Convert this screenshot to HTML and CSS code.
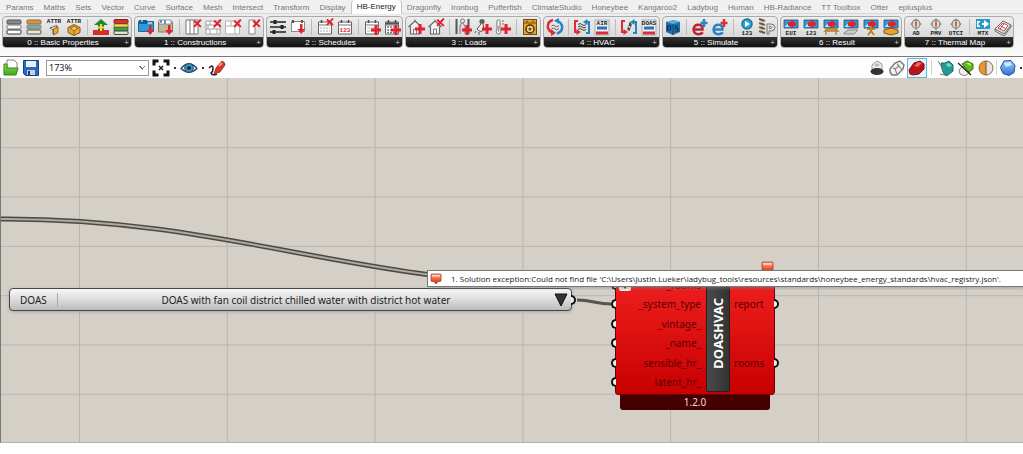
FILE: index.html
```html
<!DOCTYPE html>
<html lang="en">
<head>
<meta charset="utf-8">
<title>Grasshopper</title>
<link rel="stylesheet" href="styles.css">
</head>
<body>
<svg class="defs" aria-hidden="true">
  <defs>
    <linearGradient id="gBlue" x1="0" y1="0" x2="0" y2="1"><stop offset="0" stop-color="#9dd0fa"/><stop offset="1" stop-color="#2a6fd0"/></linearGradient>
    <linearGradient id="gBalloon" x1="0" y1="0" x2="0" y2="1"><stop offset="0" stop-color="#ffb48a"/><stop offset=".5" stop-color="#f4633a"/><stop offset="1" stop-color="#d61f10"/></linearGradient>
    <linearGradient id="gGreen" x1="0" y1="0" x2="0" y2="1"><stop offset="0" stop-color="#8fe04a"/><stop offset="1" stop-color="#3fa51c"/></linearGradient>
    <linearGradient id="gHalf" x1="0" y1="0" x2="1" y2="0"><stop offset=".5" stop-color="#e8962e"/><stop offset=".5" stop-color="#e6e6e6"/></linearGradient>
    <symbol id="plus" viewBox="0 0 10 10"><path d="M3.500 0h3v3.500H10v3H6.500V10h-3V6.500H0v-3h3.500z" fill="#e3202c"/></symbol>
    <symbol id="cross" viewBox="0 0 8 8"><path d="M1 1.500 7 7M7 .5 1 7" stroke="#e3202c" stroke-width="1.800" fill="none"/></symbol>
    <symbol id="down" viewBox="0 0 8 10"><path d="M3 0h2.500v5H8L4.200 10 .5 5H3z" fill="#e3202c"/></symbol>
    <symbol id="screen" viewBox="0 0 18 18"><path d="M2 2h14v8H2z" fill="#2e9bd2" stroke="#1c4f7c" stroke-width=".8"/><path d="M2.500 9l3-3 2 3z" fill="#bfe4f7"/><path d="M6 4h3V1.500L15 6l-6 4.500V8H6z" fill="#e3202c"/></symbol>
    <symbol id="target" viewBox="0 0 18 18"><circle cx="9" cy="6" r="4" fill="#ddd" stroke="#8a8a8a" stroke-width="1.300"/><path d="M9 .5v2M9 10v2M3.500 6h2M12.500 6h2" stroke="#777"/><path d="M9 3.500v5" stroke="#c9562e" stroke-width="1.800"/></symbol>
    <symbol id="cal" viewBox="0 0 18 18"><path d="M2.500 4h13v12h-13z" fill="#fff" stroke="#666"/><path d="M2.500 7h13" stroke="#777"/><path d="M5.500 2v3M12.500 2v3" stroke="#444" stroke-width="1.500"/></symbol>
    <symbol id="house" viewBox="0 0 18 18"><path d="M1.500 9 8 3l6.500 6M3.500 8.500V16h9V8.500" fill="#f6f6f6" stroke="#666" stroke-width="1.200"/><path d="M6.500 16v-5h3v5M8 3V1.500" fill="none" stroke="#777"/></symbol>
    <symbol id="energy" viewBox="0 0 18 18"><path d="M3 11.500h8.500C12 5.500 4 5 2.700 10.500 2 16.500 8 17.500 12 14.500" fill="none" stroke="currentColor" stroke-width="2.500"/></symbol>
    <symbol id="balloon" viewBox="0 0 12 12"><path d="M1.500 1h9q.5 0 .5.500v6q0 1-1 1H8L6 11 4 8.500H2q-1 0-1-1v-6Q1 1 1.500 1z" fill="url(#gBalloon)" stroke="#a83a2a" stroke-width=".8"/><path d="M2 2h8v1.500H2z" fill="#ffd9c2"/></symbol>
    <symbol id="loop" viewBox="0 0 18 18"><path d="M5 3H2v11h2" stroke="#dc2e39" stroke-width="2" fill="none"/><path d="M3.500 11 8 14l-4.500 3z" fill="#dc2e39"/><path d="M13 15h3V4h-2" stroke="#2684c6" stroke-width="2" fill="none"/><path d="M14.500 1 10 4l4.500 3z" fill="#2684c6"/></symbol>
  </defs>
</svg>

<nav class="tabs" aria-label="Component tabs">
  <a href="#">Params</a><a href="#">Maths</a><a href="#">Sets</a><a href="#">Vector</a><a href="#">Curve</a><a href="#">Surface</a><a href="#">Mesh</a><a href="#">Intersect</a><a href="#">Transform</a><a href="#">Display</a><a href="#" class="active" aria-current="page">HB-Energy</a><a href="#">Dragonfly</a><a href="#">Ironbug</a><a href="#">Pufferfish</a><a href="#">ClimateStudio</a><a href="#">Honeybee</a><a href="#">Kangaroo2</a><a href="#">Ladybug</a><a href="#">Human</a><a href="#">HB-Radiance</a><a href="#">TT Toolbox</a><a href="#">Otter</a><a href="#">eplusplus</a>
</nav>

<div class="ribbon">
  <section class="panel">
    <div class="icons">
      <button aria-label="Opaque"><svg viewBox="0 0 18 18"><rect x="2" y="2" width="14" height="4" rx="1" fill="#888" stroke="#555"/><rect x="2" y="7" width="14" height="4" rx="1" fill="#f7f7f7" stroke="#777"/><rect x="2" y="12" width="14" height="4" rx="1" fill="#fff" stroke="#333"/></svg></button>
      <button aria-label="Construction layers"><svg viewBox="0 0 18 18"><rect x="2" y="2" width="14" height="4" rx="1" fill="#d69248" stroke="#8a6c45"/><rect x="2" y="7" width="14" height="4" rx="1" fill="#62b4bf" stroke="#b57a45"/><rect x="2" y="12" width="14" height="4" rx="1" fill="#ece5cf" stroke="#555"/></svg></button>
      <button aria-label="Face attributes"><svg viewBox="0 0 18 18"><text x="9" y="5" class="mini">ATTR</text><path d="M5 10 12 7.500V14l-4 2v-4z" fill="#fff" stroke="#333" stroke-width=".8"/><path d="M8.500 10.500 13 9v5.500L8.500 17z" fill="#eda72d" stroke="#7b5312" stroke-width=".8"/></svg></button>
      <button aria-label="Room attributes"><svg viewBox="0 0 18 18"><text x="9" y="5" class="mini">ATTR</text><path d="M3 9.500 9 6.500l6 3v5l-6 3-6-3z" fill="#eda72d" stroke="#7b5312"/><path d="m5 10.500 4-2 4 2-4 2zM9 13v4" fill="#f8cf78" stroke="#7b5312" stroke-width=".8"/></svg></button>
      <i></i>
      <button aria-label="Search constructions"><svg viewBox="0 0 18 18"><path d="M1 12h16v5H1z" fill="#d92a2d"/><path d="M6 12V7H2l7-6 7 6h-4v5z" fill="#23823b"/><path d="M9 6v7M6 9.500h6" stroke="#f5de27" stroke-width="2"/></svg></button>
      <button aria-label="Construction set"><svg viewBox="0 0 18 18"><rect x="2" y="1.500" width="14" height="4" rx="1" fill="#d93030" stroke="#862222"/><rect x="2" y="6" width="14" height="3" fill="#f1db47" stroke="#776c22" stroke-width=".7"/><rect x="2" y="9.500" width="14" height="3" fill="#36a04b" stroke="#1e6030" stroke-width=".7"/><rect x="2" y="13" width="14" height="3.500" rx="1" fill="#e8e1c4" stroke="#444"/></svg></button>
    </div>
    <h2>0 :: Basic Properties<span>+</span></h2>
  </section>

  <section class="panel">
    <div class="icons">
      <button aria-label="Deconstruct set"><svg viewBox="0 0 18 18"><path d="M1.500 3.500h15v10h-15z" fill="#2d9bd9" stroke="#23658e"/><path d="M2 2h8v4H2z" fill="#155c94"/><path d="M4 3h2M11 5h4" stroke="#fff"/><use href="#down" x="9" y="7" width="8" height="10"/></svg></button>
      <button aria-label="Deconstruct construction"><svg viewBox="0 0 18 18"><path d="M1.500 4h14v10h-14z" fill="#c3b5a0" stroke="#8a7c68"/><path d="M2 2h12v4H2z" fill="#fff" stroke="#777" stroke-width=".7"/><path d="M4 2v3M8 2v4" stroke="#2782b8" stroke-width="1.500"/><use href="#down" x="8" y="7" width="8" height="10"/></svg></button>
      <i></i>
      <button aria-label="Window material"><svg viewBox="0 0 18 18"><path d="M2 2h12v14H2zM6 2v14M10 2v14" fill="#fff" stroke="#777"/><use href="#cross" x="9" y="1" width="9" height="9"/></svg></button>
      <button aria-label="Opaque material"><svg viewBox="0 0 18 18"><path d="M2 3h14v13H2zM2 7h14M2 11h14M6 3v4M4 7v4M10 7v4M6 11v5M13 11v5" fill="#fff" stroke="#999" stroke-width=".9"/><use href="#cross" x="9" y="1" width="9" height="9"/></svg></button>
      <button aria-label="No mass material"><svg viewBox="0 0 18 18"><path d="M1.500 3h14v13h-14zM2 8h13M7 3v5M11 8v8" fill="#fff" stroke="#aaa" stroke-width=".9"/><use href="#cross" x="9" y="1" width="9" height="9"/></svg></button>
      <button aria-label="Glazing material"><svg viewBox="0 0 18 18"><path d="M5 2h6v14H5z" fill="#fff" stroke="#888"/><use href="#cross" x="8" y="1" width="9" height="9"/></svg></button>
    </div>
    <h2>1 :: Constructions<span>+</span></h2>
  </section>

  <section class="panel">
    <div class="icons">
      <button aria-label="Schedule settings"><svg viewBox="0 0 18 18"><path d="M1 4h16M1 9h16M1 14h16" stroke="#222" stroke-width="1.500"/><path d="M6 2v4M13 7v4M5 12v4" stroke="#222" stroke-width="3"/></svg></button>
      <button aria-label="Deconstruct schedule"><svg viewBox="0 0 18 18"><path d="M2.500 3.500h13v10h-13z" fill="#fff" stroke="#888"/><path d="M4 2v3M13 2v3" stroke="#333" stroke-width="1.500"/><use href="#down" x="8" y="6" width="8" height="10"/></svg></button>
      <i></i>
      <button aria-label="Clear schedule"><svg viewBox="0 0 18 18"><use href="#cal"/><path d="M4 10h10M4 13h10" stroke="#aaa" stroke-dasharray="2 1"/><use href="#cross" x="10" y="0" width="8" height="8"/></svg></button>
      <button aria-label="Schedule to data"><svg viewBox="0 0 18 18"><use href="#cal"/><text x="9" y="14" class="mini red">123</text></svg></button>
      <i></i>
      <button aria-label="Constant schedule"><svg viewBox="0 0 18 18"><use href="#cal"/><path d="M4 10h10M4 13h10" stroke="#bbb"/><use href="#plus" x="8" y="7" width="10" height="10"/></svg></button>
      <button aria-label="Weekly schedule"><svg viewBox="0 0 18 18"><use href="#cal"/><path d="M3 4.500h12v2H3z" fill="#555"/><path d="M4 9h10M4 12h10M4 14.500h10" stroke="#777" stroke-width="1.300" stroke-dasharray="2 1"/><use href="#plus" x="8" y="7" width="10" height="10"/></svg></button>
    </div>
    <h2>2 :: Schedules<span>+</span></h2>
  </section>

  <section class="panel">
    <div class="icons">
      <button aria-label="Apply load"><svg viewBox="0 0 18 18"><use href="#house"/><use href="#plus" x="8" y="6" width="10" height="10"/></svg></button>
      <button aria-label="Remove load"><svg viewBox="0 0 18 18"><use href="#house"/><use href="#cross" x="9" y="0" width="9" height="9"/></svg></button>
      <i></i>
      <button aria-label="People"><svg viewBox="0 0 18 18"><path d="M2.500 1v15M14.500 1v15" stroke="#555" stroke-width="2"/><path d="M6 16V8l2-4 3 4v8" fill="#ddd" stroke="#777"/><circle cx="8.500" cy="3" r="2" fill="#eee" stroke="#777"/><use href="#plus" x="8" y="7" width="10" height="10"/></svg></button>
      <button aria-label="Lighting"><svg viewBox="0 0 18 18"><path d="M7 2v4L3 11q3 4 7 1L9 6V2z" fill="#eee" stroke="#555"/><path d="M6 2h4v3H6zM5 14v3M2 13l-1 2" stroke="#555" fill="#666"/><use href="#plus" x="8" y="6" width="10" height="10"/></svg></button>
      <button aria-label="Setpoint"><svg viewBox="0 0 18 18"><path d="M3 2.500q1.500-1.500 3 0V11q2 2.500-.5 5h-2Q1 14 3 11z" fill="#fff" stroke="#777"/><path d="M4.500 8v6M8 3h2M8 6h2" stroke="#999" stroke-width="1.300"/><use href="#plus" x="7" y="6" width="10" height="10"/></svg></button>
      <i></i>
      <button aria-label="Process load"><svg viewBox="0 0 18 18"><rect x="2.500" y="1.500" width="13" height="15" fill="#e9a02b" stroke="#714d13"/><path d="M3 5h12M5 3.300h2M11 3.300h2" stroke="#714d13"/><circle cx="9" cy="11" r="4" fill="#f4d28a" stroke="#4b320a" stroke-width="1.500"/><circle cx="9" cy="11" r="1.500" fill="#6b4610"/></svg></button>
    </div>
    <h2>3 :: Loads<span>+</span></h2>
  </section>

  <section class="panel">
    <div class="icons">
      <button aria-label="Ideal air"><svg viewBox="0 0 18 18"><path d="M7 2Q1 3.500 2 10q1 3 4 4.500" fill="none" stroke="#dc2e39" stroke-width="2.500"/><path d="m5 11 5 4-5 3z" fill="#dc2e39"/><path d="M11 15.500q6-2 5-8-1-3-4-4.500" fill="none" stroke="#2684c6" stroke-width="2.500"/><path d="M13 0 8 2.500 13 6z" fill="#2684c6"/><path d="M5.500 8q2-2 3.500 0t4-.5M5.500 11q2-2 3.500 0t4-.5" stroke="#666" fill="none"/></svg></button>
      <i></i>
      <button aria-label="All-air HVAC"><svg viewBox="0 0 18 18"><use href="#loop"/><path d="M5 6.500q2-2 4 0t4 0M5 9q2-2 4 0t4 0M5 11.500q2-2 4 0t4 0" stroke="#444" fill="none"/></svg></button>
      <button aria-label="All-air templates"><svg viewBox="0 0 18 18"><path d="M2 2h14v15H2z" fill="#eee" stroke="#aaa"/><text x="9" y="6.500" class="mini">AIR</text><path d="M4 10h10" stroke="#2874ba" stroke-width="3"/><path d="M3 15h12" stroke="#d92e38" stroke-width="3"/></svg></button>
      <i></i>
      <button aria-label="DOAS HVAC"><svg viewBox="0 0 18 18"><use href="#loop"/><path d="M9 4q4 1 2 5t-1 4q-4-1-2-4t1-5" fill="#444"/><circle cx="9.500" cy="9" r="1" fill="#eee"/></svg></button>
      <button aria-label="DOAS templates"><svg viewBox="0 0 18 18"><path d="M2 2h14v15H2z" fill="#eee" stroke="#aaa"/><text x="9" y="6.500" class="mini">DOAS</text><path d="M4 10h10" stroke="#2874ba" stroke-width="3"/><path d="M3 15h12" stroke="#d92e38" stroke-width="3"/></svg></button>
    </div>
    <h2>4 :: HVAC<span>+</span></h2>
  </section>

  <section class="panel">
    <div class="icons">
      <button aria-label="Model to OpenStudio"><svg viewBox="0 0 18 18"><path d="m2 4 8-2 6 2v10l-7 3-7-3z" fill="#1f6fae"/><path d="m2 4 8-2 6 2-7 2z" fill="#5baadd"/><path d="M9 6v11" stroke="#12466f"/><path d="M3.500 8h3v4h-3zM14 8h-2.500v2.500H14V13h-2.500" fill="none" stroke="#0d3352" stroke-width="1.200"/></svg></button>
      <i></i>
      <button aria-label="Annual loads"><svg viewBox="0 0 18 18" class="crimson"><use href="#energy"/><path d="M13 1v8M9.500 5h7" stroke="#2684c6" stroke-width="2.500"/></svg></button>
      <button aria-label="Run IDF"><svg viewBox="0 0 18 18" class="azure"><use href="#energy"/><path d="M13 1v8M9.500 5h7" stroke="#dc2e39" stroke-width="2.500"/></svg></button>
      <i></i>
      <button aria-label="Simulation output"><svg viewBox="0 0 18 18"><circle cx="9" cy="6" r="5" fill="#27a9d8" stroke="#17749c" stroke-width="1.500"/><path d="m7 3 5 3-5 3z" fill="#fff"/><text x="9" y="17" class="mini">123</text></svg></button>
      <button aria-label="Simulation parameter"><svg viewBox="0 0 18 18"><path d="m1 1 6 2M1 5l6 2M1 9l6 2M1 13l6 2" fill="none" stroke="#6d5a3a" stroke-width="2"/><path d="M7 3 1 5M7 7 1 9M7 11l-6 2" stroke="#b39a70"/><path d="M9 16V6h4q4 0 4 3.500T13 13h-2v3zM11.500 8.500v2H13q1.500-1 0-2z" fill="#ddd" stroke="#777"/></svg></button>
    </div>
    <h2>5 :: Simulate<span>+</span></h2>
  </section>

  <section class="panel">
    <div class="icons">
      <button aria-label="Energy use intensity"><svg viewBox="0 0 18 18"><use href="#screen"/><text x="9" y="17" class="mini">EUI</text></svg></button>
      <button aria-label="Read result data"><svg viewBox="0 0 18 18"><use href="#screen"/><text x="9" y="17" class="mini">123</text></svg></button>
      <button aria-label="Room result"><svg viewBox="0 0 18 18"><use href="#screen"/><path d="m3 13 2-2h9l2 2zM4 12v5M14 12v5" fill="#e3b45a" stroke="#b98128" stroke-width="1.300"/></svg></button>
      <button aria-label="Face result"><svg viewBox="0 0 18 18"><use href="#screen"/><path d="m2 15 4-3h10l-4 4H2z" fill="#ccc" stroke="#888"/></svg></button>
      <button aria-label="Comfort result"><svg viewBox="0 0 18 18"><use href="#screen"/><path d="M5 11h8M9 8v5l-3 4M9 13l3 4" fill="none" stroke="#b98128" stroke-width="2"/></svg></button>
      <button aria-label="Peak load result"><svg viewBox="0 0 18 18"><use href="#screen"/><path d="m2 12 7-2 7 2v3l-7 2-7-2z" fill="#e7a52f" stroke="#7b5312"/></svg></button>
    </div>
    <h2>6 :: Result<span>+</span></h2>
  </section>

  <section class="panel">
    <div class="icons">
      <button aria-label="Adaptive map"><svg viewBox="0 0 18 18"><use href="#target"/><text x="9" y="17" class="mini">AD</text></svg></button>
      <button aria-label="PMV map"><svg viewBox="0 0 18 18"><use href="#target"/><text x="9" y="17" class="mini">PMV</text></svg></button>
      <button aria-label="UTCI map"><svg viewBox="0 0 18 18"><use href="#target"/><text x="9" y="17" class="mini">UTCI</text></svg></button>
      <i></i>
      <button aria-label="Read matrix"><svg viewBox="0 0 18 18"><path d="M2 1h14v10H2z" fill="#2a9acb"/><path d="M8 5h2V2l5 4-5 4V7H8zM3 3h3v1.500H4.500v3H6V9H3z" fill="#fff"/><text x="9" y="17" class="mini">MTX</text></svg></button>
      <button aria-label="Thermal map"><svg viewBox="0 0 18 18"><path d="m1 11 8-8 8 4-7 9zM1 11v2l9 5 7-9V7" fill="#eee" stroke="#666"/><path d="m4 10 5-5 5 2.500L10 13z" fill="#fff" stroke="#c04b55"/><path d="m7 8 5 3M10 6 6 11" stroke="#c04b55"/></svg></button>
    </div>
    <h2>7 :: Thermal Map<span>+</span></h2>
  </section>
</div>

<div class="toolbar">
  <button aria-label="Open"><svg viewBox="0 0 18 18"><path d="M5 1h7l3 3v8H5z" fill="#fff" stroke="#888"/><path d="M2 16V5h3v4h11l-2 7z" fill="url(#gGreen)" stroke="#34831c"/></svg></button>
  <button aria-label="Save"><svg viewBox="0 0 18 18"><path d="M1.500 1.500h15v15h-13l-2-2z" fill="#2767c5" stroke="#174385"/><path d="M4 2h10v6H4z" fill="#e9f2fc"/><path d="M5 11h8v5H5z" fill="#c7d1dc"/><path d="M6 12h2v4H6z" fill="#1c3c6c"/></svg></button>
  <select class="zoom" aria-label="Zoom"><option>173%</option></select>
  <button aria-label="Zoom extents"><svg viewBox="0 0 18 18"><path d="M2 6.500V2h4.500M11.500 2H16v4.500M16 11.500V16h-4.500M6.500 16H2v-4.500" fill="none" stroke="#111" stroke-width="3"/><path d="m7 7 4 4m0-4-4 4" stroke="#222" stroke-width="1.500"/></svg></button>
  <b class="more"></b>
  <button aria-label="Preview"><svg viewBox="0 0 18 18"><path d="M1 9.500Q9 0 17 9.500 9 17 1 9.500z" fill="#edf5f8" stroke="#234c68" stroke-width="1.300"/><circle cx="9" cy="9" r="4.300" fill="#4297c4" stroke="#205073"/><circle cx="9" cy="9" r="2" fill="#102c3f"/></svg></button>
  <b class="more"></b>
  <button aria-label="Sketch"><svg viewBox="0 0 18 18"><path d="M1 9q4-4 4 0t-2 5q1 3 6 1" fill="none" stroke="#222" stroke-width="1.500"/><path d="M6 15 8 9l6-7q3 1 3 4l-5 7z" fill="#dd382b" stroke="#9d241c" stroke-width=".8"/><path d="m11 7 3-3" stroke="#ffaf97" stroke-width="1.500"/></svg></button>
  <span class="spacer"></span>
  <button aria-label="No preview"><svg viewBox="0 0 18 18"><path d="m4 6 5-4 5 3v6H4z" fill="#eee" stroke="#999"/><ellipse cx="9" cy="12.500" rx="6.500" ry="3.500" fill="#333"/><path d="m6 6 3-2 3 2-3 2z" fill="#bbb"/></svg></button>
  <button aria-label="Wireframe preview"><svg viewBox="0 0 18 18"><path d="m2 10 5-6 5-2 4 4-1 4-6 6H4l-2-3z" fill="#f3f3f3" stroke="#777" stroke-width="1.400"/><path d="m5 9 2 1 2 5M9 5l2 2 3 4M7 10l4-3" fill="none" stroke="#888" stroke-width="1.200"/></svg></button>
  <button aria-label="Shaded preview" aria-pressed="true" class="selected"><svg viewBox="0 0 18 18"><path d="m1 11 5-7 6-2 4 3v5l-5 5-6 1-3-1z" fill="#b9151a" stroke="#7f0c10" stroke-linejoin="round"/><path d="m6 7 4-4 4 1-4 4z" fill="#f0655f"/></svg></button>
  <i></i>
  <button aria-label="Preview selected"><svg viewBox="0 0 18 18"><path d="m4 4 4 0 4-2 4 4v6l-5 4-4-1-2-5z" fill="#229c96" stroke="#176b67" stroke-linejoin="round"/><path d="m9 5 3-1 3 3-4 1z" fill="#7ed5ce"/><path d="m1 2 6 10M3 15l8 2" stroke="#777"/></svg></button>
  <button aria-label="Document preview"><svg viewBox="0 0 18 18"><path d="m2 11 4-4 7 6-5 4-5-2z" fill="#eee" stroke="#888"/><path d="m5 5 5-3 6 3v5l-4 3z" fill="#65b91f" stroke="#3b7610"/><path d="m9 4 4 0 1 3z" fill="#c9f09a"/><path d="m1 4 13 12" stroke="#222" stroke-width="1.300"/></svg></button>
  <button aria-label="Mesh quality"><svg viewBox="0 0 18 18"><circle cx="9" cy="9" r="7" fill="url(#gHalf)" stroke="#8b6a48"/><path d="M9 2v14" stroke="#7a4a18"/></svg></button>
  <i class="tight"></i>
  <button aria-label="Preview colour"><svg viewBox="0 0 18 18"><path d="m5 2 7-.5 4 5-1 7-5 3-6-2-2.500-6z" fill="url(#gBlue)" stroke="#1c4e9c"/><path d="m5 4 6-1 2 3-6 2z" fill="#cfe8ff"/></svg></button>
  <b class="more last"></b>
</div>

<main class="canvas">
  <svg class="wires" aria-hidden="true">
    <defs><pattern id="grid" x="78" y="20" width="147.800" height="49.300" patternUnits="userSpaceOnUse"><path d="M.5 0v50M0 .5h148" stroke="#b9b5af" fill="none"/></pattern></defs>
    <rect width="100%" height="100%" fill="url(#grid)"/>
    <path d="M0 141C170 140 290 179 430 197L612 206" fill="none" stroke="#4b4944" stroke-width="5"/>
    <path d="M0 141C170 140 290 179 430 197L612 206" fill="none" stroke="#aeaaa2" stroke-width="2"/>
    <path d="M576 222C592 222 594 226 610 226" fill="none" stroke="#55534e" stroke-width="3"/>
  </svg>

  <div class="value-list">
    <span class="name">DOAS</span>
    <span class="value">DOAS with fan coil district chilled water with district hot water</span>
    <button aria-label="Choose value"><svg viewBox="0 0 14 14"><path d="M1 1h12L7 13z" fill="#333" stroke="#111"/></svg></button>
    <span class="grip"></span>
  </div>

  <div class="component">
    <div class="core">
      <svg class="expand" viewBox="0 0 12 12" aria-hidden="true"><rect width="12" height="12" rx="2" fill="#eee"/><path d="M3 6h6L6 10z" fill="#333"/></svg>
      <ul class="inputs"><li>_rooms</li><li>_system_type</li><li>_vintage_</li><li>_name_</li><li>sensible_hr_</li><li>latent_hr_</li></ul>
      <div class="title"><span>DOASHVAC</span></div>
      <ul class="outputs"><li>report</li><li>rooms</li></ul>
    </div>
    <div class="version">1.2.0</div>
  </div>

  <svg class="flag" viewBox="0 0 12 12" aria-hidden="true"><use href="#balloon"/></svg>

  <div class="tooltip" role="tooltip">
    <svg viewBox="0 0 12 12" aria-hidden="true"><use href="#balloon"/></svg>
    <span>1. Solution exception:Could not find file 'C:\Users\Justin.Lueker\ladybug_tools\resources\standards\honeybee_energy_standards\hvac_registry.json'.</span>
  </div>
</main>
</body>
</html>
```

FILE: styles.css
```css
*, *::before, *::after { box-sizing: border-box; }

body {
  margin: 0;
  height: 100vh;
  display: flex;
  flex-direction: column;
  padding-bottom: 11px;
  overflow: hidden;
  background: #fff;
  font-family: "Liberation Sans", Arial, sans-serif;
}

button {
  border: 0;
  padding: 0;
  background: none;
  display: flex;
  align-items: center;
  justify-content: center;
  font: inherit;
}

.defs { position: absolute; width: 0; height: 0; }

/* Tab strip */
.tabs {
  flex: none;
  display: flex;
  height: 14px;
  padding-left: 1px;
  background: #f0f0f0;
  border-bottom: 1px solid #d8d8d8;
}
.tabs a {
  padding: 0 5px;
  font-size: 8px;
  line-height: 15px;
  color: #777;
  text-decoration: none;
  white-space: nowrap;
}
.tabs .active {
  height: 14px;
  line-height: 13px;
  color: #222;
  background: #fff;
  border: 1px solid #c4c4c4;
  border-width: 0 1px;
  border-radius: 4px 4px 0 0;
}

/* Ribbon */
.ribbon {
  flex: none;
  display: grid;
  grid-template-columns: 130fr 130fr 137fr 136fr 117fr 116fr 122fr 110fr;
  gap: 2px;
  height: 43px;
  padding: 2px 9px 8px 2px;
  background: linear-gradient(#ececec, #fafafa);
  border-bottom: 1px solid #777;
}
.panel {
  display: flex;
  flex-direction: column;
  overflow: hidden;
  border: 1px solid #aaa;
  border-radius: 4px;
  background: linear-gradient(#ededed, #cfcfcf);
}
.icons {
  flex: 1;
  display: flex;
  align-items: center;
  justify-content: center;
}
.icons button { width: 20px; }
.icons svg { width: 18px; height: 18px; }
.icons i {
  width: 1px;
  height: 16px;
  margin: 0 3px;
  background: #bcbcbc;
}
.panel h2 {
  display: flex;
  justify-content: center;
  position: relative;
  margin: 0 -1px -1px;
  height: 11px;
  padding-right: 8px;
  font-size: 8px;
  font-weight: 400;
  line-height: 11px;
  color: #fff;
  background: linear-gradient(#333, #0c0c0c);
}
.panel h2 span { position: absolute; right: 3px; color: #ccc; }

.mini {
  font: bold 6px "Liberation Mono", monospace;
  text-anchor: middle;
  fill: #222;
}
.red { fill: #e3202c; }
.crimson { color: #b82535; }
.azure { color: #2684c6; }

/* Canvas toolbar */
.toolbar {
  flex: none;
  display: flex;
  align-items: center;
  height: 21px;
  padding-left: 1px;
  background: #fdfdfd;
}
.toolbar button { width: 20px; height: 20px; }
.toolbar svg { width: 18px; height: 18px; flex: none; }
.toolbar .selected { border: 1px solid #6db2d5; background: #e8f4fa; }
.toolbar i {
  width: 1px;
  height: 15px;
  margin: 0 4px;
  background: #d0d0d0;
}
.toolbar .tight { margin: 0 1px 0 0; }
.more {
  width: 2px;
  height: 2px;
  margin: 0 3px;
  background: #333;
}
.last { margin: 0 1px 0 2px; }
.spacer { flex: 1; }
.zoom {
  width: 103px;
  height: 16px;
  margin: 0 2px 0 5px;
  padding: 0 2px;
  border: 1px solid #999;
  appearance: none;
  background:
    linear-gradient(45deg, transparent 50%, #777 50%, #777 65%, transparent 65%) right 5px center / 4px 4px no-repeat,
    linear-gradient(-45deg, transparent 50%, #777 50%, #777 65%, transparent 65%) right 2px center / 4px 4px no-repeat,
    #fff;
  font: 9px "Noto Sans", sans-serif;
  color: #222;
}

/* Canvas */
.canvas {
  flex: 1;
  position: relative;
  overflow: hidden;
  border-left: 1px solid #777;
  border-bottom: 1px solid #b5b2ac;
  background: #d4d0c8;
  font-family: "Noto Sans", "Open Sans", sans-serif;
}
.wires { position: absolute; inset: 0; width: 100%; height: 100%; }

.value-list {
  position: absolute;
  left: 8px;
  top: 210px;
  width: 563px;
  height: 23px;
  display: flex;
  align-items: center;
  padding: 0 3px 0 10px;
  border: 1px solid #444;
  border-radius: 4px;
  background: linear-gradient(#f8f8f8, #dcdcdc 50%, #bcbcbc);
  box-shadow: 0 1px 3px #8888;
  font-size: 10px;
  line-height: 14px;
  color: #222;
}
.value-list .name { padding-right: 10px; border-right: 1px solid #aaa; }
.value-list .value { flex: 1; text-align: center; }
.value-list svg { width: 14px; height: 14px; }
.grip, .inputs li::before, .outputs li::after {
  position: absolute;
  width: 5px;
  height: 10px;
  border: 2px solid #111;
  background: #eee;
}
.grip, .outputs li::after {
  right: -5px;
  border-left: 0;
  border-radius: 0 5px 5px 0;
}

.component {
  position: absolute;
  left: 614px;
  top: 194px;
  width: 160px;
  font-size: 10px;
  color: #5c0000;
}
.core {
  position: relative;
  z-index: 1;
  display: flex;
  height: 123px;
  padding: 2px 0;
  border: 1px solid #6d0000;
  border-radius: 3px;
  background: linear-gradient(#f02020, #e01212 45%, #c80000);
}
.core ul { margin: 0; padding: 0; list-style: none; }
.core li {
  position: relative;
  display: flex;
  align-items: center;
}
.inputs { width: 90px; display: grid; grid-template-rows: repeat(6, 1fr); }
.inputs li { justify-content: flex-end; padding-right: 5px; }
.inputs li::before {
  content: "";
  left: -5px;
  border-right: 0;
  border-radius: 5px 0 0 5px;
}
.outputs { flex: 1; display: grid; grid-template-rows: repeat(2, 1fr); }
.outputs li { padding-left: 4px; }
.outputs li::after { content: ""; }
.title {
  display: flex;
  align-items: center;
  justify-content: center;
  width: 24px;
  border: 1px solid #222;
  border-radius: 2px;
  background: linear-gradient(90deg, #4a4a4a, #333);
  color: #fff;
  font-size: 13px;
  font-weight: 700;
}
.title span { writing-mode: vertical-rl; transform: rotate(180deg); }
.expand {
  position: absolute;
  left: 3px;
  top: 6px;
  width: 12px;
  height: 12px;
}
.version {
  height: 16px;
  margin: -1px 5px 0;
  border-radius: 0 0 3px 3px;
  background: #450000;
  color: #f0dada;
  line-height: 16px;
  text-align: center;
}

.flag {
  position: absolute;
  left: 760px;
  top: 183px;
  width: 13px;
  height: 13px;
}

.tooltip {
  position: absolute;
  left: 426px;
  right: 0;
  top: 192px;
  z-index: 2;
  height: 17px;
  display: flex;
  align-items: center;
  gap: 9px;
  padding-left: 2px;
  border: 1px solid #777;
  border-right: 0;
  background: #fff;
  box-shadow: 1px 2px 2px #8886;
  font-family: "Open Sans", sans-serif;
  font-size: 8px;
  color: #222;
  white-space: nowrap;
}
.tooltip svg { flex: none; width: 12px; height: 12px; }
```
